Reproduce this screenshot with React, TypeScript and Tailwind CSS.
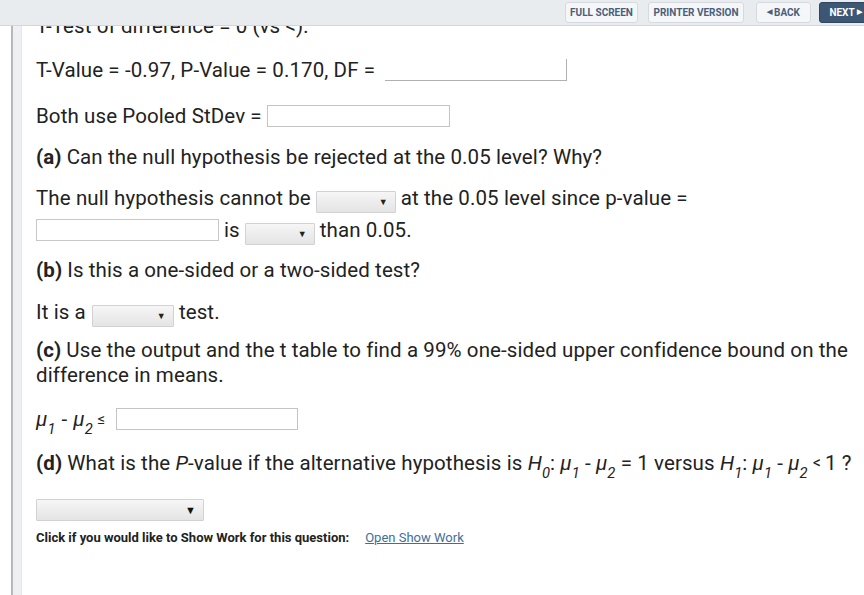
import { ReactNode } from 'react'

function TextBox({ w, className = '' }: { w: number; className?: string }) {
  return (
    <span
      className={`inline-block h-[22px] bg-white border border-[#c8c8c8] ${className}`}
      style={{ width: w }}
    />
  )
}

function Select({ w, big = false }: { w: number; big?: boolean }) {
  return (
    <span
      className="inline-flex h-[22px] items-center justify-end rounded-[1px] border border-[#d2d2d2] bg-gradient-to-b from-[#f6f6f6] to-[#e4e4e4] pr-[7px]"
      style={{ width: w }}
    >
      <span className={big ? 'text-[11px] leading-none text-[#111]' : 'text-[9px] leading-none text-[#222]'}>▼</span>
    </span>
  )
}

function Row({ children, className = '' }: { children: ReactNode; className?: string }) {
  return <div className={`flex h-[24px] items-center whitespace-nowrap ${className}`}>{children}</div>
}

function Mu({ n }: { n: number }) {
  return (
    <span className="italic">
      μ<sub className="text-[0.72em] italic align-[-0.3em]">{n}</sub>
    </span>
  )
}

function HeaderButton({ children, w }: { children: ReactNode; w: number }) {
  return (
    <div
      className="flex h-[21px] items-center justify-center rounded-[3px] border border-[#d6dade] bg-[#f5f6f8] text-[10px] font-bold text-[#4a5f7c]"
      style={{ width: w }}
    >
      {children}
    </div>
  )
}

export default function App() {
  return (
    <div className="relative h-[595px] w-[864px] overflow-hidden bg-white font-['Roboto',sans-serif] text-[20.5px] tracking-[0.1px] text-[#222]">
      <div className="relative z-10 flex h-[26px] items-center justify-end border-b border-[#d3d7db] bg-[#e9ecef] tracking-normal">
        <HeaderButton w={73}>FULL SCREEN</HeaderButton>
        <div className="ml-[10px]">
          <HeaderButton w={96}>PRINTER VERSION</HeaderButton>
        </div>
        <div className="ml-[12px]">
          <HeaderButton w={55}>
            <span className="mr-[2px] text-[7px]">◀</span>BACK
          </HeaderButton>
        </div>
        <div className="ml-[8px] mr-[-8px] flex h-[21px] w-[53px] items-center justify-center rounded-[3px] border border-[#2f4763] bg-[#3d5674] text-[10px] font-bold text-white">
          NEXT<span className="ml-[2px] text-[7px]">▶</span>
        </div>
      </div>

      <div className="flex h-[569px]">
        <div className="w-[11px] bg-white" />
        <div className="w-[2px] bg-[#b8b8b8]" />
        <div className="w-[9px] border-r border-[#e3e6ea] bg-[#eef1f4]" />
        <div className="flex-1 overflow-hidden pl-[14px]">
          <Row className="-mt-[12px]">T-Test of difference = 0 (vs &lt;):</Row>

          <Row className="mt-[20px]">
            T-Value = -0.97, P-Value = 0.170, DF =
            <span className="ml-[10px] inline-block h-[22px] w-[182px] border-b border-r border-[#b0b0b0]" />
          </Row>

          <Row className="mt-[22px]">
            Both use Pooled StDev =
            <span className="ml-[5px] inline-block h-[22px] w-[183px] border border-[#c4c4c4]" />
          </Row>

          <Row className="mt-[17px]">
            <span className="mr-[5px] font-bold">(a)</span>Can the null hypothesis be rejected at the 0.05 level? Why?
          </Row>

          <Row className="mt-[17px]">
            The null hypothesis cannot be
            <span className="ml-[5px] mr-[5px]">
              <Select w={80} />
            </span>
            at the 0.05 level since p-value =
          </Row>

          <Row className="mt-[8px]">
            <TextBox w={183} />
            <span className="ml-[5px]">is</span>
            <span className="mx-[5px]">
              <Select w={70} />
            </span>
            than 0.05.
          </Row>

          <Row className="mt-[16px]">
            <span className="mr-[5px] font-bold">(b)</span>Is this a one-sided or a two-sided test?
          </Row>

          <Row className="mt-[18px]">
            It is a
            <span className="ml-[6px] mr-[5px]">
              <Select w={82} />
            </span>
            test.
          </Row>

          <div className="mt-[14px] whitespace-nowrap leading-[25px]">
            <span className="mr-[5px] font-bold">(c)</span>Use the output and the t table to find a 99% one-sided upper confidence bound on the
            <br />
            difference in means.
          </div>

          <Row className="mt-[19px]">
            <Mu n={1} />
            <span className="mx-[6px]">-</span>
            <Mu n={2} />
            <span className="ml-[5px] text-[15px]">≤</span>
            <span className="ml-[10px] inline-block h-[22px] w-[182px] border border-[#c4c4c4]" />
          </Row>

          <Row className="mt-[20px]">
            <span className="mr-[5px] font-bold">(d)</span>What is the&nbsp;<span className="italic">P</span>-value if the alternative hypothesis is&nbsp;
            <span className="italic">
              H<sub className="text-[0.72em] italic align-[-0.3em]">0</sub>
            </span>
            :&nbsp;<Mu n={1} />&nbsp;-&nbsp;<Mu n={2} />&nbsp;= 1 versus&nbsp;
            <span className="italic">
              H<sub className="text-[0.72em] italic align-[-0.3em]">1</sub>
            </span>
            :&nbsp;<Mu n={1} />&nbsp;-&nbsp;<Mu n={2} />
            <span className="ml-[5px] text-[16px]">&lt;</span>
            <span className="ml-[4px]">1 ?</span>
          </Row>

          <Row className="mt-[23px]">
            <Select w={168} big />
          </Row>

          <div className="mt-[6px] flex h-[20px] items-center whitespace-nowrap text-[13px] tracking-normal">
            <span className="font-bold text-[#222]">Click if you would like to Show Work for this question:</span>
            <a href="#" className="ml-[16px] text-[#3d6f9e] underline">
              Open Show Work
            </a>
          </div>
        </div>
      </div>
    </div>
  )
}
